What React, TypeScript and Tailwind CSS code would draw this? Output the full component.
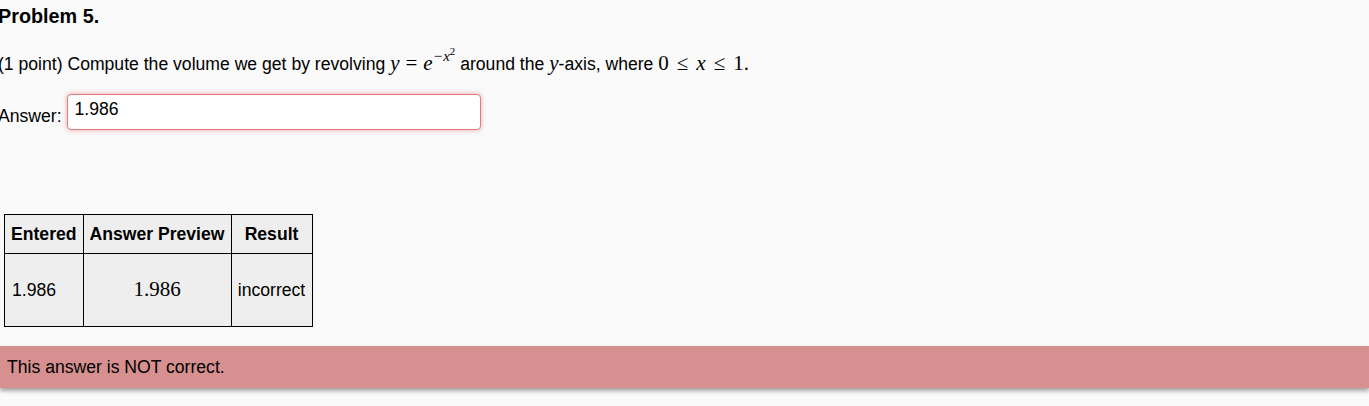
export default function App() {
  const serif = 'font-["Liberation_Serif",serif]'
  return (
    <div className='min-h-[406px] bg-[#fafafa] text-black font-["Liberation_Sans",Arial,sans-serif] text-[17.6px]'>
      <div className="-ml-[2px] pt-[4px]">
        <h3 className="text-[19.8px] font-bold leading-[24px]">Problem 5.</h3>
        <p className="mt-[22px] leading-[26px]">
          (1 point) Compute the volume we get by revolving{' '}
          <span className={`${serif} text-[21px]`}>
            <i>y</i>
            <span className="mx-[6px]">=</span>
            <i>e</i>
            <sup className="text-[15px] -top-[9px] ml-[1px]">
              −<i className="ml-[1px]">x</i>
              <sup className="text-[11px] -top-[6px]">2</sup>
            </sup>
          </span>
          {' '}around the <i className={`${serif} text-[21px]`}>y</i>-axis, where{' '}
          <span className={`${serif} text-[21px]`}>
            0<span className="mx-[8px]">≤</span>
            <i>x</i>
            <span className="mx-[8px]">≤</span>1.
          </span>
        </p>
        <div className="mt-[17px] flex items-center">
          <span className="mt-[8px]">Answer:</span>
          <input
            readOnly
            value="1.986"
            className="ml-[5px] w-[414px] h-[36px] rounded-[4px] border border-[#e07c7c] bg-white px-[7px] pb-[6px] shadow-[0_0_5px_rgba(220,60,60,0.45)] outline-none"
          />
        </div>
      </div>
      <table className="ml-[4px] mt-[84px] border-collapse bg-[#eeeeee]">
        <thead>
          <tr className="h-[39px]">
            <th className="border border-black px-[6px] font-bold w-[78px]">Entered</th>
            <th className="border border-black px-[6px] font-bold w-[148px]">Answer Preview</th>
            <th className="border border-black px-[6px] font-bold w-[81px]">Result</th>
          </tr>
        </thead>
        <tbody>
          <tr className="h-[73px]">
            <td className="border border-black px-[7px]">1.986</td>
            <td className={`border border-black text-center ${serif} text-[21px]`}>1.986</td>
            <td className="border border-black px-[6px] text-center">incorrect</td>
          </tr>
        </tbody>
      </table>
      <div className="mt-[19px] h-[42px] bg-[#d69090] px-[7px] flex items-center shadow-[0_3px_4px_rgba(0,0,0,0.35)]">
        This answer is NOT correct.
      </div>
    </div>
  )
}
